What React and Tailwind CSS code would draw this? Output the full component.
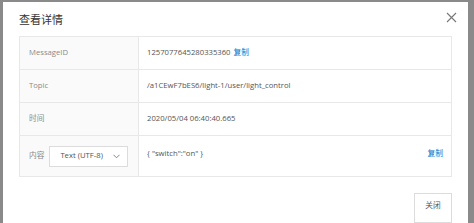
import React from 'react';

export default function App() {
  const rows = [
    { label: 'MessageID', value: '1257077645280335360', copy: 'inline' },
    { label: 'Topic', value: '/a1CEwF7bES6/light-1/user/light_control' },
    { label: '时间', value: '2020/05/04 06:40:40.665' },
  ];

  return (
    <div className="w-[474px] h-[223px] bg-[#8a8a8a] pt-[2px] pl-[3px] overflow-hidden font-['Open_Sans','Noto_Sans_CJK_SC',sans-serif]">
      <div className="w-[465px] h-[221px] bg-white px-[16px] flex flex-col">
        {/* Header */}
        <div className="h-[37px] flex items-center justify-between">
          <h1 className="text-[11px] text-[#333] leading-none pt-[1px]">查看详情</h1>
          <svg width="11" height="11" viewBox="0 0 11 11" className="mr-[-5px] mt-[-3px]">
            <path d="M1 1L10 10M10 1L1 10" stroke="#777" strokeWidth="1.1" />
          </svg>
        </div>

        {/* Table */}
        <div className="border border-[#e8e8e8] text-[7.7px] leading-none">
          {rows.map((r) => (
            <div key={r.label} className="flex h-[33px] border-b border-[#e8e8e8]">
              <div className="w-[119px] bg-[#fafafa] border-r border-[#e8e8e8] flex items-center pl-[9px] text-[#8a8a8a]">
                {r.label}
              </div>
              <div className="flex-1 flex items-center pl-[8px] text-[#555]">
                {r.value}
                {r.copy && <span className="ml-[3px] text-[#0070cc]">复制</span>}
              </div>
            </div>
          ))}
          <div className="flex h-[40px]">
            <div className="w-[119px] bg-[#fafafa] border-r border-[#e8e8e8] flex items-center pl-[9px] text-[#8a8a8a] gap-[5px]">
              <span>内容</span>
              <div className="w-[79px] h-[21px] bg-white border border-[#dcdcdc] flex items-center justify-between pl-[10px] pr-[7px] text-[#555]">
                <span>Text (UTF-8)</span>
                <svg width="7" height="5" viewBox="0 0 7 5">
                  <path d="M0.5 0.8L3.5 3.8L6.5 0.8" stroke="#777" strokeWidth="0.9" fill="none" />
                </svg>
              </div>
            </div>
            <div className="flex-1 flex items-center justify-between pl-[8px] pr-[8px] pb-[4px] text-[#555]">
              <span>{'{ "switch":"on" }'}</span>
              <span className="text-[#0070cc]">复制</span>
            </div>
          </div>
        </div>

        {/* Footer */}
        <div className="flex justify-end mt-[16px]">
          <button className="w-[38px] h-[30px] border border-[#dcdcdc] bg-white text-[7.7px] text-[#555] leading-none pb-[4px]">
            关闭
          </button>
        </div>
      </div>
    </div>
  );
}
